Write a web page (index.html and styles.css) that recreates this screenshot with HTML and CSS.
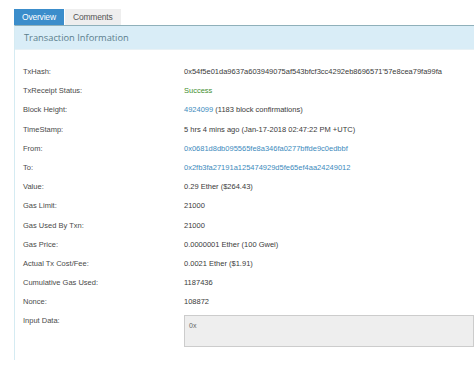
FILE: index.html
```html
<!DOCTYPE html>
<html>
<head>
<meta charset="utf-8">
<link rel="stylesheet" href="styles.css">
</head>
<body>
<div class="page">
  <div class="tabs">
    <div class="tab active">Overview</div>
    <div class="tab">Comments</div>
  </div>
  <div class="panel">
    <div class="panel-head">Transaction Information</div>
    <div class="rows">
      <div class="row"><div class="k">TxHash:</div><div class="v">0x54f5e01da9637a603949075af543bfcf3cc4292eb8696571'57e8cea79fa99fa</div></div>
      <div class="row"><div class="k">TxReceipt Status:</div><div class="v ok">Success</div></div>
      <div class="row"><div class="k">Block Height:</div><div class="v"><span class="link">4924099</span> (1183 block confirmations)</div></div>
      <div class="row"><div class="k">TimeStamp:</div><div class="v">5 hrs 4 mins ago (Jan-17-2018 02:47:22 PM +UTC)</div></div>
      <div class="row"><div class="k">From:</div><div class="v link">0x0681d8db095565fe8a346fa0277bffde9c0edbbf</div></div>
      <div class="row"><div class="k">To:</div><div class="v link">0x2fb3fa27191a125474929d5fe65ef4aa24249012</div></div>
      <div class="row"><div class="k">Value:</div><div class="v">0.29 Ether ($264.43)</div></div>
      <div class="row"><div class="k">Gas Limit:</div><div class="v">21000</div></div>
      <div class="row"><div class="k">Gas Used By Txn:</div><div class="v">21000</div></div>
      <div class="row"><div class="k">Gas Price:</div><div class="v">0.0000001 Ether (100 Gwei)</div></div>
      <div class="row"><div class="k">Actual Tx Cost/Fee:</div><div class="v">0.0021 Ether ($1.91)</div></div>
      <div class="row"><div class="k">Cumulative Gas Used:</div><div class="v">1187436</div></div>
      <div class="row"><div class="k">Nonce:</div><div class="v">108872</div></div>
      <div class="row input-row"><div class="k">Input Data:</div><div class="v"><div class="input-box">0x</div></div></div>
    </div>
  </div>
</div>
</body>
</html>
```
FILE: styles.css
```css
html, body { margin: 0; padding: 0; background: #fff; }
body { font-family: "Liberation Sans", Arial, sans-serif; color: #333; }
.page { padding: 9px 0 0 14px; width: 460px; overflow: hidden; }
.tabs { display: flex; gap: 1px; height: 16px; }
.tab {
  font-size: 8.5px; line-height: 16px; padding: 0 8px; color: #555;
  background: #eee; letter-spacing: -0.2px;
}
.tab.active { background: #3b8dcb; color: #fff; width: 34px; }
.tab:not(.active) { width: 40px; }
.panel { border-left: 1px solid #d5ebf2; border-top: 1px solid #8fb0ba; padding-bottom: 13px; }
.panel-head {
  background: #d9edf7; height: 23px; line-height: 23px; padding-left: 9px;
  font-family: "Open Sans", sans-serif; font-size: 9.3px; color: #5b7e8d;
  border-bottom: 1px solid #e8f1f5;
}
.rows { padding: 17px 0 0 8px; }
.row { display: flex; height: 19.2px; align-items: flex-start; font-size: 7.5px; line-height: 10px; }
.k { width: 161px; flex: none; color: #4a4a4a; }
.v { white-space: nowrap; color: #3a3a3a; }
.ok { color: #3f8f2f; }
.link { color: #3c8bbd; }
.input-row { height: auto; }
.input-row .v { flex: 1; }
.input-box {
  margin-top: -1px; height: 24px; background: #eee; border: 1px solid #ccc;
  padding: 6px 4px 0; font-size: 7px; line-height: 8px; color: #666;
}
```
